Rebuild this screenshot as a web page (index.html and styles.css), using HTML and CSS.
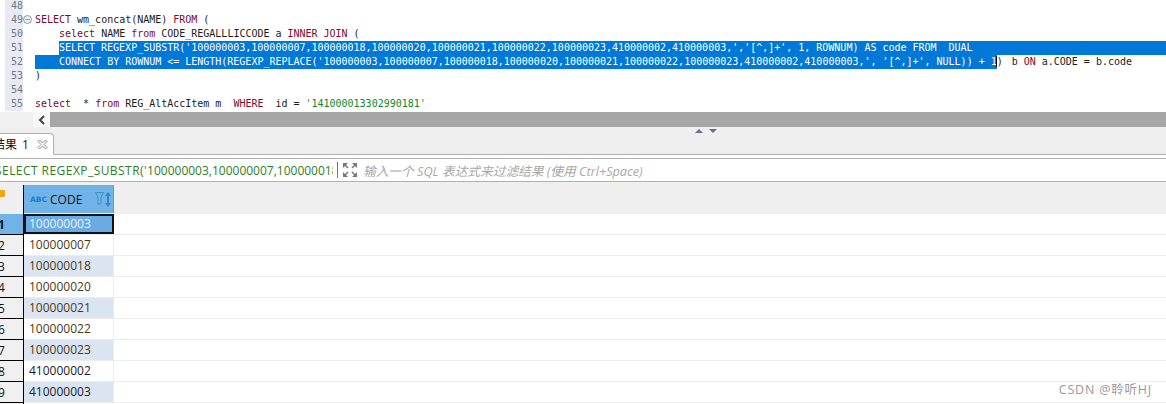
FILE: index.html
```html
<!DOCTYPE html>
<html lang="zh">
<head>
<meta charset="utf-8">
<title>SQL</title>
<link rel="stylesheet" href="styles.css">
</head>
<body>
<section class="editor">
  <div class="line"><span class="num">48</span><span class="code"></span></div>
  <div class="line"><span class="num">49<i class="fold"></i></span><span class="code"><b>SELECT</b> wm_concat(NAME) <b>FROM</b> (</span></div>
  <div class="line"><span class="num">50</span><span class="code">    <b>select</b> NAME <b>from</b> CODE_REGALLLICCODE a <b>INNER JOIN</b> (</span></div>
  <div class="line"><span class="num">51</span><span class="code wide"><span class="indent"></span><span class="sel fill">SELECT REGEXP_SUBSTR('100000003,100000007,100000018,100000020,100000021,100000022,100000023,410000002,410000003,','[^,]+', 1, ROWNUM) AS code FROM  DUAL</span></span></div>
  <div class="line"><span class="num">52</span><span class="code"><span class="sel">    CONNECT BY ROWNUM &lt;= LENGTH(REGEXP_REPLACE('100000003,100000007,100000018,100000020,100000021,100000022,100000023,410000002,410000003,', '[^,]+', NULL)) + 1</span><span class="caret">)</span>  b <b>ON</b> a.CODE = b.code</span></div>
  <div class="line"><span class="num">53</span><span class="code">)</span></div>
  <div class="line"><span class="num">54</span><span class="code"></span></div>
  <div class="line"><span class="num">55</span><span class="code"><b>select</b>  * <b>from</b> REG_AltAccItem m  <b>WHERE</b>  id = <em>'141000013302990181'</em></span></div>
</section>
<div class="hscroll">
  <span class="arrow"><svg width="8" height="10" viewBox="0 0 8 10"><path d="M6 1 2 5l4 4" fill="none" stroke="#444" stroke-width="2"/></svg></span>
  <span class="thumb"></span>
</div>
<div class="sash">
  <i class="tri up"></i><i class="tri down"></i>
</div>
<div class="tabs">
  <div class="tab"><span class="tab-label">结果 1</span>
    <svg class="close" width="11" height="11" viewBox="0 0 11 11"><path d="M1 2.500 2.500 1 5.500 4 8.500 1 10 2.500 7 5.500 10 8.500 8.500 10 5.500 7 2.500 10 1 8.500 4 5.500Z" fill="#fff" stroke="#8a8a8a"/></svg>
  </div>
</div>
<div class="tab-gap"></div>
<div class="filter">
  <div class="query"><span class="query-head">SELECT REGEXP_SUBSTR('</span>100000003,100000007,100000018,100000020,100000021</div>
  <span class="divider"></span>
  <svg class="expand" width="16" height="16" viewBox="0 0 16 16"><path d="M1 6V1h5L1 6M15 6V1h-5l5 5M1 10v5h5l-5-5M15 10v5h-5l5-5" fill="#777"/><path d="M2 2l4 4M14 2l-4 4M2 14l4-4M14 14l-4-4" stroke="#777" stroke-width="1.500"/></svg>
  <span class="hint">输入一个 SQL 表达式来过滤结果 (使用 Ctrl+Space)</span>
</div>
<section class="grid">
  <div class="head">
    <div class="corner"><span class="lock"></span></div>
    <div class="col">
      <span class="abc">ABC</span><span class="title">CODE</span>
      <svg class="sort" width="16" height="15" viewBox="0 0 16 15"><path d="M.5.500h8L6 5.500V11L3 12.500v-7Z" fill="none" stroke="#3f8fcf"/><path d="M13 0l3 4h-2v7h2l-3 4-3-4h2V4h-2Z" fill="#2f86c8"/></svg>
    </div>
  </div>
  <div class="row active"><div class="no">1</div><div class="cell">100000003</div></div>
  <div class="row"><div class="no">2</div><div class="cell">100000007</div></div>
  <div class="row alt"><div class="no">3</div><div class="cell">100000018</div></div>
  <div class="row"><div class="no">4</div><div class="cell">100000020</div></div>
  <div class="row alt"><div class="no">5</div><div class="cell">100000021</div></div>
  <div class="row"><div class="no">6</div><div class="cell">100000022</div></div>
  <div class="row alt"><div class="no">7</div><div class="cell">100000023</div></div>
  <div class="row"><div class="no">8</div><div class="cell dark">410000002</div></div>
  <div class="row alt"><div class="no">9</div><div class="cell dark">410000003</div></div>
  <div class="row"><div class="no"></div><div class="cell"></div></div>
</section>
<div class="mark">CSDN @聆听HJ</div>
</body>
</html>
```
FILE: styles.css
```css
* { box-sizing: border-box; }
html, body { margin: 0; height: 404px; overflow: hidden; background: #fff; }
body { position: relative; font-family: "Open Sans", "Noto Sans CJK SC", sans-serif; }

.editor { height: 112px; padding-left: 5px; background: #fff; overflow: hidden; }
.line { display: flex; height: 14px; font: 10px/14px "DejaVu Sans Mono", monospace; letter-spacing: -0.01px; white-space: pre; color: #1c1c1c; }
.line:first-child { margin-top: -1px; }
.num { flex: none; position: relative; width: 30px; padding-left: 6px; height: 14px; color: #6d7a80; background: linear-gradient(to right, #e9e9f3 18px, #fff 18px); }
.fold { position: absolute; left: 18px; top: 2px; width: 9px; height: 9px; border: 1px solid #8a9bb0; border-radius: 50%; background: linear-gradient(#8a9bb0, #8a9bb0) center / 5px 1px no-repeat #eef2f6; }
.code { flex: 1; min-width: 0; }
.code.wide { display: flex; }
.indent { flex: none; width: 24px; }
.code b { font-weight: 400; color: #7f0a2a; }
.code em { font-style: normal; color: #0a8a2a; }
.sel { background: #0078d7; color: #fff; display: inline-block; height: 14px; }
.sel.fill { flex: 1; }
.caret { border-left: 1px solid #000; margin-left: -1px; margin-right: -3px; }

.hscroll { display: flex; height: 15px; background: #f0f0f0; padding-left: 33px; }
.arrow { width: 17px; height: 15px; display: flex; align-items: center; justify-content: center; background: #f8f8f8; }
.thumb { flex: 1; background: #a6a6a6; }

.sash { display: flex; gap: 6px; height: 6px; padding: 2px 0 0 695px; background: #efefef; }
.tri { width: 0; height: 0; border-left: 4px solid transparent; border-right: 4px solid transparent; }
.tri.up { border-bottom: 4px solid #6a6aa0; }
.tri.down { border-top: 4px solid #6a6aa0; }

.tabs { height: 22px; display: flex; align-items: flex-end; border-bottom: 1px solid #b0b0b0; background: #efefef; }
.tab { display: flex; align-items: center; gap: 8px; width: 54px; height: 22px; margin-bottom: -1px; font-size: 12px; color: #111; background: #fff; border: 1px solid #b0b0b0; border-left: 0; border-bottom-color: #fff; border-top-right-radius: 4px; overflow: hidden; white-space: nowrap; }
.tab-label { flex: none; margin-left: -7px; word-spacing: 2px; }
.close { flex: none; }
.tab-gap { height: 3px; background: #fff; }

.filter { display: flex; align-items: center; height: 24px; background: #fff; border-top: 1px solid #b0b0b0; border-bottom: 1px solid #b0b0b0; }
.query { flex: none; width: 338px; margin-left: -5px; font-size: 12px; color: #2f7d1f; white-space: nowrap; overflow: hidden; }
.query-head { letter-spacing: 0.45px; }
.divider { flex: none; width: 1px; height: 16px; margin: 0 4px; background: #777; }
.expand { flex: none; }
.hint { margin-left: 5px; font-style: italic; font-size: 12.700px; color: #a8a8a8; white-space: nowrap; }

.grid { padding-top: 3px; background: linear-gradient(#efefef 3px, #fff 3px); }
.head { display: flex; height: 29px; background: #efefef; }
.corner { position: relative; width: 24px; border-right: 1px solid #000; }
.lock { position: absolute; left: -2px; top: 5px; width: 7px; height: 7px; background: #eda711; border-radius: 1px; }
.col { display: flex; align-items: center; width: 90px; height: 28px; background: #71b3e9; border-right: 1px solid #8f8f8f; border-top: 1px solid #a4a4a4; padding-left: 6px; }
.abc { font-family: "DejaVu Sans", sans-serif; font-size: 7.500px; font-weight: 700; color: #1080d0; }
.title { margin-left: 3px; font-size: 12px; color: #111; }
.sort { margin-left: auto; margin-right: 2px; }
.row { display: flex; height: 21px; border-bottom: 1px solid #ededed; }
.no { flex: none; width: 24px; margin-bottom: -1px; background: #f0f0f0; border-right: 1px solid #000; border-bottom: 1px solid #000; font-size: 12px; line-height: 22px; text-indent: -2px; color: #111; overflow: hidden; }
.cell { flex: none; width: 90px; padding-left: 5px; font-size: 12px; line-height: 20px; color: #4a3a1a; border-right: 1px solid #ededed; }
.cell.dark { color: #1a1a2a; }
.row.alt .cell { background: #dbe5f1; }
.row.active .no { background: #71b3e9; font-weight: 700; }
.row.active .cell { background: #6aabe3; color: #e8f2fa; border: 0; outline: 2px solid #111; outline-offset: -2px; }

.mark { position: absolute; right: 14px; bottom: 6px; font-size: 12.500px; letter-spacing: 0.8px; color: #999; }
```
